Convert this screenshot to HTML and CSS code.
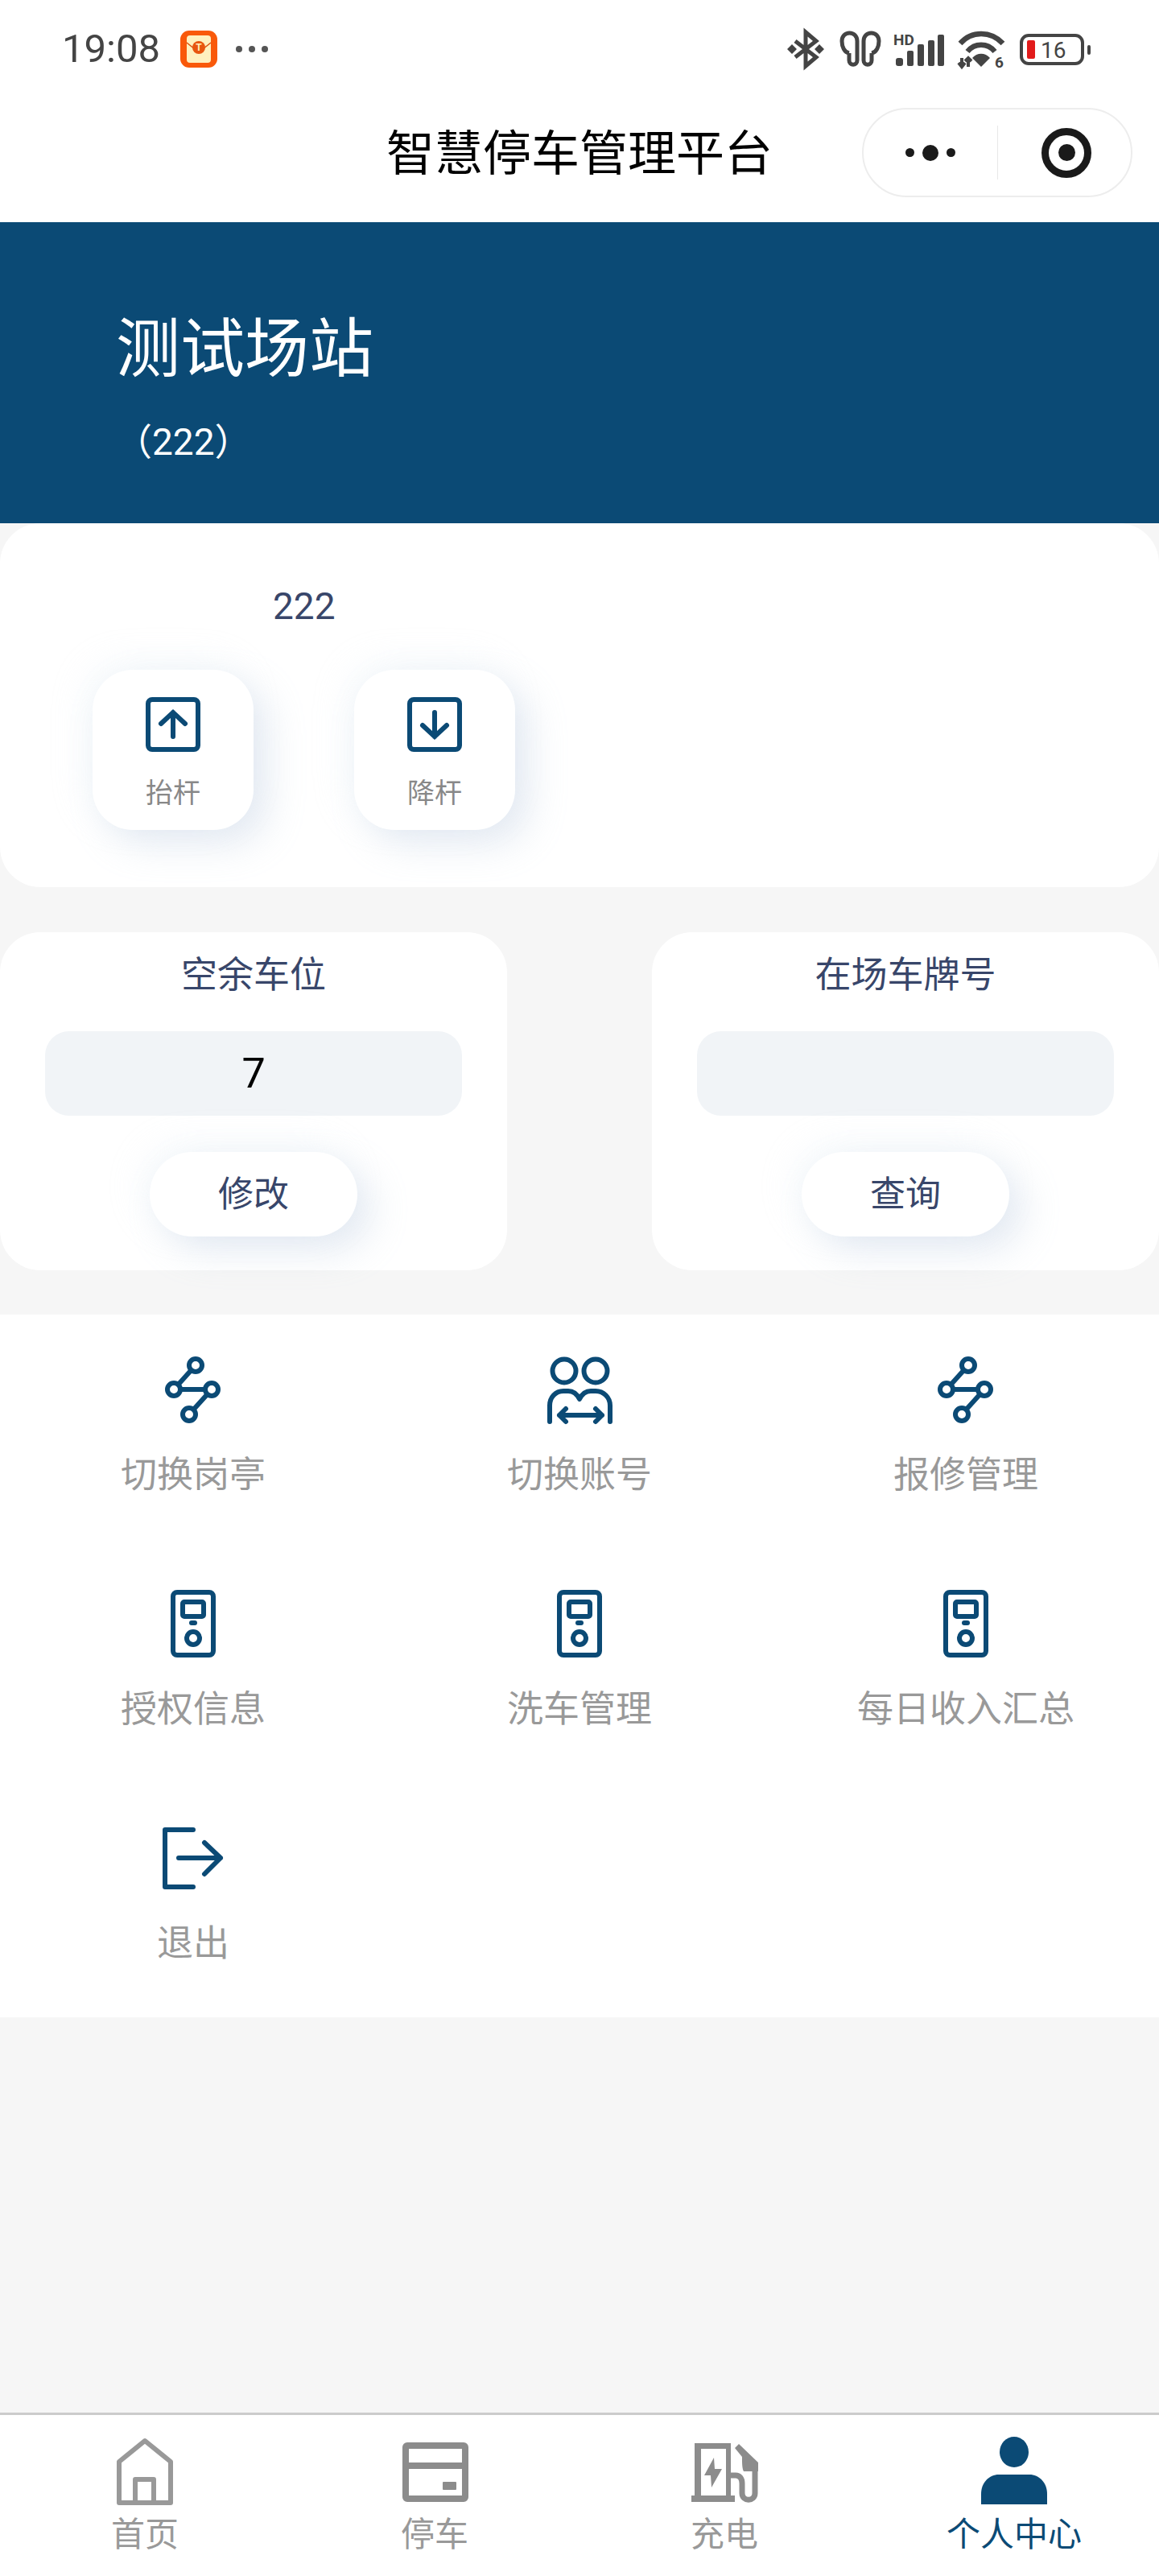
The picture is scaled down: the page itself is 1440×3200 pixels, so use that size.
FILE: index.html
```html
<!DOCTYPE html>
<html lang="zh-CN">

<head>
    <meta charset="UTF-8">
    <meta name="viewport" content="width=device-width, initial-scale=1.0">
    <title>智慧停车管理平台</title>
    <link rel="stylesheet" href="styles.css">
</head>

<body>
    <div class="page">

        <!-- status bar -->
        <div class="status">
            <div class="status-left">
                <span class="time">19:08</span>
                <svg class="app-icon" viewBox="0 0 46 46">
                    <rect width="46" height="46" rx="11" fill="#f9590a" />
                    <rect x="8" y="6" width="30" height="34" rx="4" fill="#fff0bf" />
                    <path d="M8 15 L23 27 L38 15" fill="none" stroke="#d9500f" stroke-width="1.5" />
                    <circle cx="23" cy="21" r="8" fill="#e8560f" />
                    <text x="23" y="25" class="app-t">T</text>
                </svg>
                <svg class="status-dots" viewBox="0 0 40 10">
                    <circle cx="4" cy="5" r="4" />
                    <circle cx="20" cy="5" r="4" />
                    <circle cx="36" cy="5" r="4" />
                </svg>
            </div>
            <div class="status-right">
                <svg class="ic-bt" viewBox="0 0 44 48">
                    <path d="M9 14 L35 34 L22 45 V3 L35 14 L9 34" />
                    <path class="solid" d="M5 18 L11 24 L5 30 L-1 24 Z M39 18 L45 24 L39 30 L33 24 Z" />
                </svg>
                <svg class="ic-pods" viewBox="0 0 50 44">
                    <path d="M11 27 C5 26 2 19 2 12 C2 6 6 2 11.5 2 C17 2 21 6 21 12 V36 C21 43 11 43 11 36 V27" />
                    <path transform="translate(50,0) scale(-1,1)" d="M11 27 C5 26 2 19 2 12 C2 6 6 2 11.5 2 C17 2 21 6 21 12 V36 C21 43 11 43 11 36 V27" />
                </svg>
                <svg class="ic-signal" viewBox="0 0 63 41">
                    <text x="0" y="15" class="ic-hd">HD</text>
                    <g class="solid">
                        <rect x="3" y="31" width="9" height="10" rx="3" />
                        <rect x="17" y="22" width="8" height="19" rx="2" />
                        <rect x="30" y="14" width="8" height="27" rx="2" />
                        <rect x="43" y="9" width="8" height="32" rx="2" />
                        <rect x="55" y="2" width="8" height="39" rx="2" />
                    </g>
                </svg>
                <svg class="ic-wifi" viewBox="0 0 59 45">
                    <path class="thick" d="M3 15 C17 -1 41 -1 56 15" />
                    <path class="thick" d="M12 25 C21 14 37 14 46 25" />
                    <path class="solid" d="M18 33 C24 26 34 26 40 33 L29 44 Z" />
                    <path class="thin" d="M5 33 V44 M1 39 L5 44 L9 39 M13 44 V33 M9 37 L13 33 L17 37" />
                    <text x="46" y="45" class="ic-six">6</text>
                </svg>
                <svg class="ic-battery" viewBox="0 0 88 39">
                    <rect class="thin" x="2" y="2" width="76" height="35" rx="9" />
                    <rect x="9" y="8" width="10" height="23" rx="2" class="batt-red" />
                    <text x="26" y="30" class="ic-16">16</text>
                    <rect x="84" y="14" width="4" height="12" rx="2" class="solid" />
                </svg>
            </div>
        </div>

        <!-- nav bar -->
        <div class="nav">
            <div></div>
            <div class="nav-title">智慧停车管理平台</div>
            <div class="capsule">
                <div class="capsule-dots">
                    <i class="dot"></i><i class="dot dot-big"></i><i class="dot"></i>
                </div>
                <div class="capsule-line"></div>
                <div class="capsule-target"><i class="target"></i></div>
            </div>
        </div>

        <div class="hero">
            <div class="hero-title">测试场站</div>
            <div class="hero-sub">（222）</div>
        </div>

        <!-- gate -->
        <div class="gate-card">
            <div class="gate-name">222</div>
            <div class="gate-btns">
                <div class="gate-btn">
                    <svg class="gate-icon" viewBox="0 0 68 68">
                        <rect x="3" y="3" width="62" height="62" rx="5" />
                        <path d="M34 49 V19 M19 33 L34 19 L49 33" />
                    </svg>
                    <span>抬杆</span>
                </div>
                <div class="gate-btn">
                    <svg class="gate-icon" viewBox="0 0 68 68">
                        <rect x="3" y="3" width="62" height="62" rx="5" />
                        <path d="M34 19 V49 M19 35 L34 49 L49 35" />
                    </svg>
                    <span>降杆</span>
                </div>
            </div>
        </div>

        <div class="cards">
            <div class="card">
                <div class="card-title">空余车位</div>
                <div class="card-input">7</div>
                <div class="card-btn">修改</div>
            </div>
            <div class="card">
                <div class="card-title">在场车牌号</div>
                <div class="card-input"></div>
                <div class="card-btn">查询</div>
            </div>
        </div>

        <!-- menu -->
        <div class="menu">
            <div class="menu-item">
                <svg class="menu-icon" viewBox="0 0 84 84">
                    <path d="M45 12 L18 42 H65 L37 73" />
                    <circle cx="45" cy="12" r="8" />
                    <circle cx="18" cy="42" r="8" />
                    <circle cx="65" cy="42" r="8" />
                    <circle cx="37" cy="73" r="8" />
                </svg>
                <span>切换岗亭</span>
            </div>
            <div class="menu-item">
                <svg class="menu-icon" viewBox="0 0 84 84">
                    <circle cx="23" cy="19" r="14.5" />
                    <circle cx="62" cy="19" r="14.5" />
                    <path d="M5 82 V62 C5 52 12 44 22 44 H28 C35 44 39 48 42 54 C45 48 49 44 56 44 H62 C72 44 80 52 80 62 V82" />
                    <path d="M17 74 H70 M25 66 L17 74 L25 82 M62 66 L70 74 L62 82" />
                </svg>
                <span>切换账号</span>
            </div>
            <div class="menu-item">
                <svg class="menu-icon" viewBox="0 0 84 84">
                    <path d="M45 12 L18 42 H65 L37 73" />
                    <circle cx="45" cy="12" r="8" />
                    <circle cx="18" cy="42" r="8" />
                    <circle cx="65" cy="42" r="8" />
                    <circle cx="37" cy="73" r="8" />
                </svg>
                <span>报修管理</span>
            </div>
            <div class="menu-item">
                <svg class="menu-icon" viewBox="0 0 84 84">
                    <rect x="17" y="3" width="50" height="78" rx="5" />
                    <rect x="29" y="15" width="26" height="18" rx="2" />
                    <path d="M40 41 H44" />
                    <circle cx="42" cy="60" r="8" />
                </svg>
                <span>授权信息</span>
            </div>
            <div class="menu-item">
                <svg class="menu-icon" viewBox="0 0 84 84">
                    <rect x="17" y="3" width="50" height="78" rx="5" />
                    <rect x="29" y="15" width="26" height="18" rx="2" />
                    <path d="M40 41 H44" />
                    <circle cx="42" cy="60" r="8" />
                </svg>
                <span>洗车管理</span>
            </div>
            <div class="menu-item">
                <svg class="menu-icon" viewBox="0 0 84 84">
                    <rect x="17" y="3" width="50" height="78" rx="5" />
                    <rect x="29" y="15" width="26" height="18" rx="2" />
                    <path d="M40 41 H44" />
                    <circle cx="42" cy="60" r="8" />
                </svg>
                <span>每日收入汇总</span>
            </div>
            <div class="menu-item">
                <svg class="menu-icon" viewBox="0 0 84 84">
                    <path d="M42 7 H7 V78 H42" />
                    <path d="M24 42 H76 M56 23 L76 42 L56 62" />
                </svg>
                <span>退出</span>
            </div>
        </div>

        <!-- tab bar -->
        <div class="tabbar">
            <div class="tab">
                <svg class="tab-icon tab-line" viewBox="0 0 84 84">
                    <path d="M10 30 L42 4 L74 30 V81 H10 Z" />
                    <path d="M30 81 V52 H53 V81" />
                </svg>
                <span>首页</span>
            </div>
            <div class="tab">
                <svg class="tab-icon tab-wallet" viewBox="0 0 84 84">
                    <rect x="6" y="10" width="74" height="66" rx="2" />
                    <path d="M6 35 H80" />
                    <rect class="tab-fill" x="52" y="55" width="17" height="10" rx="1" />
                </svg>
                <span>停车</span>
            </div>
            <div class="tab">
                <svg class="tab-icon tab-charge" viewBox="0 0 84 84">
                    <path class="tab-fill" fill-rule="evenodd" d="M5 7 H50 V72 H55 V80 H1 V72 H5 Z M13 14 V72 H44 V14 Z" />
                    <path class="tab-fill" d="M29 25 L17 47 H25 L26 62 L39 39 H30 Z" />
                    <path class="tab-fill" d="M55 13 L60 8 L84 31 V42 H66 C64 38 64 32 64 24 Z" />
                    <path class="tab-hose" d="M50 47 H56 C61 47 64 51 64 57 V69 C64 80 80 80 80 69 V38" />
                </svg>
                <span>充电</span>
            </div>
            <div class="tab tab-active">
                <svg class="tab-icon" viewBox="0 0 84 84">
                    <ellipse cx="42" cy="18" rx="18" ry="19" class="tab-fill" />
                    <path class="tab-fill" d="M1 83 V70 C1 56 11 46 23 46 H61 C73 46 83 56 83 70 V83 Z" />
                </svg>
                <span>个人中心</span>
            </div>
        </div>

    </div>
</body>

</html>
```

FILE: styles.css
```css
*{
    padding: 0;
    margin: 0;
    box-sizing: border-box;
}
body{
    font-family: Roboto, "Noto Sans CJK SC", sans-serif;
    background-color: #f6f6f6;
}
.page{
    width: 1440px;
    height: 3200px;
    display: flex;
    flex-direction: column;
}

/* status bar */
.status{
    height: 122px;
    background-color: #fff;
    display: flex;
    justify-content: space-between;
    align-items: center;
    padding: 0 85px 0 77px;
}
.status-left,.status-right{
    display: flex;
    align-items: center;
}
.time{
    font-size: 49px;
    line-height: 60px;
    width: 147px;
    color: #444;
}
.app-icon{
    width: 46px;
    height: 46px;
}
.app-t{
    font-size: 12px;
    font-weight: bold;
    text-anchor: middle;
    fill: #fff0bf;
}
.status-dots{
    width: 40px;
    height: 10px;
    margin-left: 23px;
    fill: #555;
}
.status-right svg{
    fill: none;
    stroke: #444;
    stroke-width: 5;
    overflow: visible;
}
.status-right .solid{
    fill: #444;
    stroke: none;
}
.status-right .thin{
    stroke-width: 4;
}
.status-right .thick{
    stroke-width: 6.5;
}
.status-right text{
    font-family: Roboto, sans-serif;
    fill: #444;
    stroke: none;
}
.ic-bt{
    width: 44px;
    height: 48px;
}
.ic-pods{
    width: 50px;
    height: 44px;
    margin-left: 21px;
}
.ic-signal{
    width: 63px;
    height: 41px;
    margin-left: 16px;
}
.ic-hd{
    font-size: 19px;
    font-weight: bold;
}
.ic-wifi{
    width: 59px;
    height: 45px;
    margin-left: 17px;
}
.ic-six{
    font-size: 19px;
    font-weight: bold;
}
.ic-battery{
    width: 88px;
    height: 39px;
    margin-left: 18px;
}
.batt-red{
    fill: #e21b1b;
    stroke: none;
}
.ic-16{
    font-size: 28px;
}

/* nav */
.nav{
    height: 154px;
    background-color: #fff;
    display: grid;
    grid-template-columns: 1fr auto 1fr;
    align-items: start;
    padding-top: 12px;
}
.nav-title{
    font-size: 60px;
    line-height: 115px;
    color: #000;
}
.capsule{
    width: 336px;
    height: 111px;
    border: 2px solid #ededed;
    border-radius: 56px;
    justify-self: end;
    margin-right: 33px;
    display: flex;
    align-items: center;
}
.capsule-dots{
    width: 166px;
    display: flex;
    justify-content: center;
    align-items: center;
    gap: 10px;
}
.dot{
    width: 11px;
    height: 11px;
    border-radius: 50%;
    background-color: #1a1a1a;
}
.dot-big{
    width: 20px;
    height: 20px;
}
.capsule-line{
    width: 1px;
    height: 67px;
    background-color: #e8e8e8;
}
.capsule-target{
    flex: 1;
    display: flex;
    justify-content: center;
    padding-left: 5px;
}
.target{
    width: 62px;
    height: 62px;
    border-radius: 50%;
    border: 9px solid #1a1a1a;
    display: flex;
    align-items: center;
    justify-content: center;
}
.target::after{
    content: "";
    width: 21px;
    height: 21px;
    border-radius: 50%;
    background-color: #1a1a1a;
}

/* hero */
.hero{
    height: 374px;
    background-color: #0b4a75;
    color: #fff;
    padding: 108px 0 0 144px;
}
.hero-title{
    font-size: 80px;
    line-height: 100px;
}
.hero-sub{
    font-size: 46px;
    line-height: 60px;
    margin: 35px 0 0 -1px;
}

/* gate card */
.gate-card{
    height: 452px;
    background-color: #fff;
    border-radius: 50px;
    padding: 73px 0 0 115px;
}
.gate-name{
    font-size: 46px;
    line-height: 60px;
    color: #38466a;
    padding-left: 224px;
}
.gate-btns{
    display: flex;
    gap: 125px;
    margin-top: 49px;
}
.gate-btn{
    width: 200px;
    height: 199px;
    border-radius: 50px;
    background-color: #fff;
    box-shadow: 18px 18px 46px rgba(170, 190, 215, .3), -10px -10px 40px rgba(225, 235, 245, .25);
    display: flex;
    flex-direction: column;
    align-items: center;
    padding-top: 34px;
    font-size: 34px;
    line-height: 44px;
    color: #888;
}
.gate-btn span{
    margin-top: 29px;
}
.gate-icon{
    width: 68px;
    height: 68px;
    fill: none;
    stroke: #0b4a75;
    stroke-width: 6;
    stroke-linecap: round;
}

/* two cards */
.cards{
    display: flex;
    justify-content: space-between;
    margin-top: 56px;
}
.card{
    width: 630px;
    height: 420px;
    background-color: #fff;
    border-radius: 50px;
    padding: 24px 56px 0;
    display: flex;
    flex-direction: column;
    align-items: center;
}
.card-title{
    font-size: 45px;
    line-height: 60px;
    color: #38466a;
}
.card-input{
    width: 518px;
    height: 105px;
    margin-top: 39px;
    border-radius: 30px;
    background-color: #f1f4f7;
    font-size: 52px;
    line-height: 105px;
    text-align: center;
    color: #000;
}
.card-btn{
    width: 258px;
    height: 105px;
    margin-top: 45px;
    border-radius: 53px;
    background-color: #fff;
    font-size: 44px;
    line-height: 107px;
    text-align: center;
    color: #38466a;
    box-shadow: 18px 18px 46px rgba(170, 190, 215, .3), -10px -10px 40px rgba(225, 235, 245, .25);
}

/* menu */
.menu{
    height: 873px;
    margin-top: 55px;
    background-color: #fff;
    display: grid;
    grid-template-columns: repeat(3, 480px);
    grid-auto-rows: 291px;
}
.menu-item{
    display: flex;
    flex-direction: column;
    align-items: center;
    padding-top: 51px;
    font-size: 45px;
    line-height: 60px;
    color: #999;
}
.menu-item span{
    margin-top: 35px;
}
.menu-icon{
    width: 84px;
    height: 84px;
    fill: none;
    stroke: #0b4a75;
    stroke-width: 6;
    stroke-linecap: round;
    stroke-linejoin: round;
    overflow: visible;
}
.menu-icon circle{
    fill: #fff;
}

/* tab bar */
.tabbar{
    margin-top: auto;
    height: 203px;
    background-color: #fff;
    border-top: 3px solid #ccc;
    display: grid;
    grid-template-columns: repeat(4, 360px);
}
.tab{
    display: flex;
    flex-direction: column;
    align-items: center;
    padding-top: 28px;
    font-size: 42px;
    line-height: 52px;
    color: #999;
}
.tab span{
    margin-top: 11px;
}
.tab-icon{
    width: 84px;
    height: 84px;
    overflow: visible;
}
.tab-line{
    fill: none;
    stroke: #999;
    stroke-width: 6;
    stroke-linejoin: round;
}
.tab-wallet{
    fill: none;
    stroke: #8c8c8c;
    stroke-width: 8;
}
.tab-wallet .tab-fill{
    fill: #8c8c8c;
    stroke: none;
}
.tab-charge .tab-fill{
    fill: #8c8c8c;
}
.tab-hose{
    fill: none;
    stroke: #8c8c8c;
    stroke-width: 7;
}
.tab-active{
    color: #0b4a75;
}
.tab-active .tab-fill{
    fill: #0b4a75;
}
```
